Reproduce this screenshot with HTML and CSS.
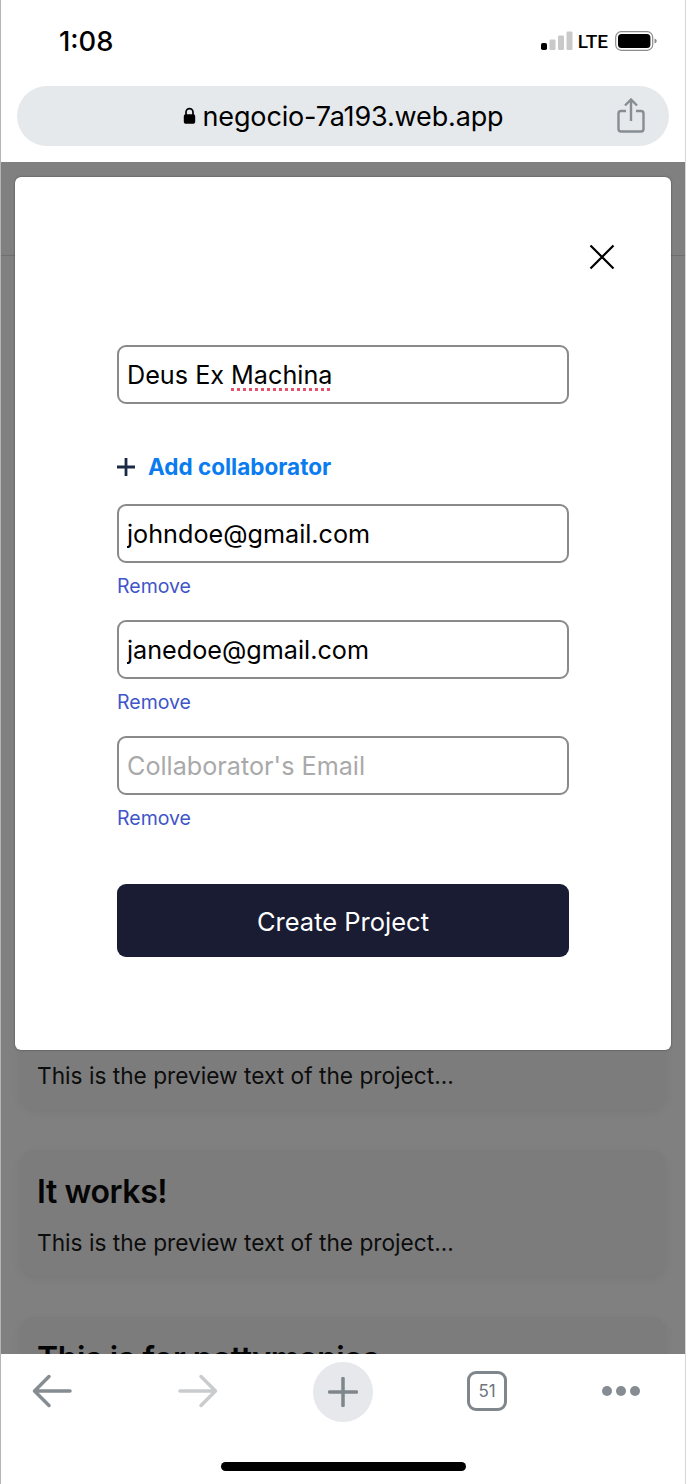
FILE: index.html
```html
<!DOCTYPE html>
<html lang="en">
<head>
  <meta charset="UTF-8" />
  <meta name="viewport" content="width=device-width, initial-scale=1.0"/>
  <title>negocio-7a193.web.app</title>
  <link rel="stylesheet" href="styles.css">
</head>
<body>

<div class="phone">

  <!-- Status bar -->
  <div class="status-bar">
    <span class="clock">1:08</span>
    <div class="status-icons">
      <svg class="signal" width="32" height="20" viewBox="0 0 32 20">
        <rect x="0" y="12" width="6" height="7" rx="1.8" fill="#000"/>
        <rect x="8.500" y="8.500" width="6" height="10.500" rx="1.200" fill="#c9c9c9"/>
        <rect x="17" y="4.500" width="6" height="14.500" rx="1.200" fill="#c9c9c9"/>
        <rect x="25.500" y="0.500" width="6" height="18.500" rx="1.200" fill="#c9c9c9"/>
      </svg>
      <span class="network">LTE</span>
      <svg class="battery" width="42" height="20" viewBox="0 0 42 20">
        <rect x="0.700" y="0.700" width="37" height="18.600" rx="5.500" fill="#fff" stroke="#8c8c8c" stroke-width="1.200"/>
        <rect x="3" y="3" width="32.400" height="14" rx="3.500" fill="#000"/>
        <path d="M39.500 7.500c1.400.4 2.200 1.300 2.200 2.500s-.8 2.100-2.200 2.500z" fill="#8c8c8c"/>
      </svg>
    </div>
  </div>

  <!-- Address bar -->
  <div class="address-wrap">
    <div class="address-bar">
      <div class="address">
        <svg width="13" height="18" viewBox="0 0 13 18">
          <path d="M3 8V5.200a3.500 3.500 0 0 1 7 0V8" fill="none" stroke="#000" stroke-width="1.700"/>
          <rect x="0.800" y="7.200" width="11.400" height="9.600" rx="1.800" fill="#000"/>
        </svg>
        <span>negocio-7a193.web.app</span>
      </div>
      <svg class="share" width="28" height="36" viewBox="0 0 28 36">
        <path d="M9 13H4a2.500 2.500 0 0 0-2.500 2.500v15.500A2.500 2.500 0 0 0 4 33.500h20a2.500 2.500 0 0 0 2.500-2.500V15.500A2.500 2.500 0 0 0 24 13h-5" fill="none" stroke="#868d93" stroke-width="2.400"/>
        <path d="M14 23V2M8 7.500 14 1.500l6 6" fill="none" stroke="#868d93" stroke-width="2.400"/>
      </svg>
    </div>
  </div>

  <!-- Page behind the dialog -->
  <div class="viewport">
    <div class="app-nav"></div>
    <div class="project-list">
      <div class="project-card">
        <h3>My first project</h3>
        <p>This is the preview text of the project...</p>
      </div>
      <div class="project-card">
        <h3>It works!</h3>
        <p>This is the preview text of the project...</p>
      </div>
      <div class="project-card">
        <h3>This is for pattymanias</h3>
      </div>
    </div>

    <!-- Create project dialog -->
    <div class="modal">
      <div class="modal-top">
        <svg width="26" height="26" viewBox="0 0 26 26">
          <path d="M1.500 1.500 24.500 24.500M24.500 1.500 1.500 24.500" stroke="#000" stroke-width="2.200" fill="none"/>
        </svg>
      </div>
      <form class="project-form">
        <div class="field"><span>Deus Ex <span class="misspelled">Machina</span></span></div>

        <div class="add-row">
          <svg width="18" height="18" viewBox="0 0 18 18">
            <path d="M9 0V18M0 9H18" stroke="#1a2a44" stroke-width="2.800" fill="none"/>
          </svg>
          <span>Add collaborator</span>
        </div>

        <div class="collaborator">
          <input class="field" type="text" value="johndoe@gmail.com">
          <a class="remove">Remove</a>
        </div>
        <div class="collaborator">
          <input class="field" type="text" value="janedoe@gmail.com">
          <a class="remove">Remove</a>
        </div>
        <div class="collaborator">
          <input class="field" type="text" placeholder="Collaborator's Email">
          <a class="remove">Remove</a>
        </div>

        <button class="create-btn" type="button">Create Project</button>
      </form>
    </div>
  </div>

  <!-- Browser toolbar -->
  <div class="toolbar">
    <div class="toolbar-icons">
      <svg class="back" width="40" height="34" viewBox="0 0 40 34">
        <path d="M38 17H3M17 2.500 2.500 17 17 31.500" fill="none" stroke="#858c92" stroke-width="3.500" stroke-linecap="round" stroke-linejoin="round"/>
      </svg>
      <svg width="40" height="34" viewBox="0 0 40 34">
        <path d="M2 17H37M23 2.500 37.500 17 23 31.500" fill="none" stroke="#c9cbcd" stroke-width="3.500" stroke-linecap="round" stroke-linejoin="round"/>
      </svg>
      <div class="new-tab">
        <svg width="30" height="30" viewBox="0 0 30 30">
          <path d="M15 1.500V28.500M1.500 15H28.500" fill="none" stroke="#7f868c" stroke-width="3.500" stroke-linecap="round"/>
        </svg>
      </div>
      <div class="tab-count">51</div>
      <div class="more">
        <i></i><i></i><i></i>
      </div>
    </div>
    <div class="home-indicator"></div>
  </div>

</div>

</body>
</html>
```

FILE: styles.css
```css
* {
  box-sizing: border-box;
}

html, body {
  margin: 0;
  height: 100%;
}

body {
  font-family: Inter, "Noto Sans", sans-serif;
  background: #fff;
  color: #000;
}

.phone {
  width: 686px;
  height: 1484px;
  display: flex;
  flex-direction: column;
  overflow: hidden;
  border-left: 1px solid #b5b5b5;
  border-right: 1px solid #d5d5d5;
}

/* status bar */
.status-bar {
  height: 86px;
  flex: none;
  display: flex;
  justify-content: space-between;
  align-items: flex-start;
  padding: 25px 28px 0 58px;
}

.clock {
  font-size: 27.300px;
  line-height: 32px;
  font-weight: 500;
  position: relative;
  top: 1px;
}

.status-icons {
  display: flex;
  align-items: center;
  gap: 5px;
  height: 32px;
}

.network {
  font-size: 19px;
  font-weight: 500;
  font-family: Roboto, sans-serif;
}

.battery {
  margin-left: 2px;
}

/* address bar */
.address-wrap {
  height: 76px;
  flex: none;
  padding: 0 16px;
}

.address-bar {
  position: relative;
  height: 60px;
  border-radius: 30px;
  background: #e6e9ec;
  display: flex;
  align-items: center;
  justify-content: center;
}

.address {
  display: flex;
  align-items: center;
  gap: 7px;
  font-size: 27px;
  letter-spacing: -0.15px;
}

.share {
  position: absolute;
  right: 24px;
  top: 12px;
}

/* page behind the modal */
.viewport {
  flex: 1;
  min-height: 0;
  position: relative;
  overflow: hidden;
  background: #808080;
}

.app-nav {
  height: 94px;
  border-bottom: 1px solid #6f6f6f;
}

.project-list {
  padding: 727px 19px 0;
  display: flex;
  flex-direction: column;
  gap: 41px;
}

.project-card {
  height: 126px;
  flex: none;
  padding: 23px 17px;
  border-radius: 15px;
  background: #7c7c7c;
  box-shadow: 0 3px 10px rgba(0, 0, 0, 0.06);
}

.project-card h3 {
  margin: 0;
  font-size: 32px;
  line-height: 38px;
  font-weight: 600;
  letter-spacing: -0.4px;
  color: #050505;
}

.project-card p {
  margin: 17px 0 0;
  font-size: 22.700px;
  line-height: 30px;
  color: #0c0c0c;
}

/* modal */
.modal {
  position: absolute;
  left: 14px;
  top: 15px;
  width: 656px;
  height: 873px;
  background: #fff;
  border-radius: 6px;
  box-shadow: 0 0 2px rgba(0, 0, 0, 0.5);
}

.modal-top {
  height: 168px;
  padding: 67px 56px 0 0;
  display: flex;
  justify-content: flex-end;
  align-items: flex-start;
}

.project-form {
  padding: 0 102px;
}

.field {
  display: flex;
  align-items: center;
  width: 100%;
  height: 59px;
  padding: 0 8px;
  border: 2px solid #8a8a8a;
  border-radius: 9px;
  font-family: Inter, sans-serif;
  font-size: 25.200px;
  color: #000;
  background: #fff;
  outline: none;
}

.field::placeholder {
  color: #a9a9a9;
  opacity: 1;
}

.misspelled {
  text-decoration: underline dotted #e8506a 3px;
  text-underline-offset: 4px;
}

.add-row {
  display: flex;
  align-items: center;
  gap: 13px;
  height: 100px;
  padding-top: 25px;
  color: #0a7cf0;
  font-size: 22.500px;
  font-weight: 700;
}

.collaborator {
  height: 116px;
}

.remove {
  display: block;
  margin-top: 11px;
  font-size: 19.500px;
  line-height: 24px;
  color: #3f55c8;
}

.create-btn {
  display: block;
  width: 100%;
  height: 73px;
  margin-top: 32px;
  padding: 1px 0 0;
  border: none;
  border-radius: 9px;
  background: #191c33;
  color: #fff;
  font-family: Inter, sans-serif;
  font-size: 25.500px;
}

/* toolbar */
.toolbar {
  height: 130px;
  flex: none;
  background: #fff;
  position: relative;
  z-index: 1;
}

.toolbar-icons {
  height: 100px;
  display: flex;
  gap: 95px;
  align-items: flex-start;
  padding: 8px 0 0 31px;
}

.toolbar-icons svg {
  margin-top: 12px;
  display: block;
}

.toolbar-icons .back {
  margin-right: 11px;
}

.new-tab {
  width: 60px;
  height: 60px;
  margin-right: -1px;
  border-radius: 50%;
  background: #e6e8eb;
  display: flex;
  align-items: center;
  justify-content: center;
}

.toolbar-icons .new-tab svg {
  margin-top: 0;
}

.tab-count {
  width: 40px;
  height: 40px;
  margin-top: 9px;
  border: 3.500px solid #7f868c;
  border-radius: 9px;
  display: flex;
  align-items: center;
  justify-content: center;
  font-size: 17px;
  color: #6f767c;
}

.more {
  display: flex;
  gap: 4px;
  margin-top: 24px;
}

.more i {
  width: 10px;
  height: 10px;
  border-radius: 50%;
  background: #858c92;
}

.home-indicator {
  width: 245px;
  height: 9px;
  margin: 8px auto 0;
  border-radius: 5px;
  background: #000;
}
```
